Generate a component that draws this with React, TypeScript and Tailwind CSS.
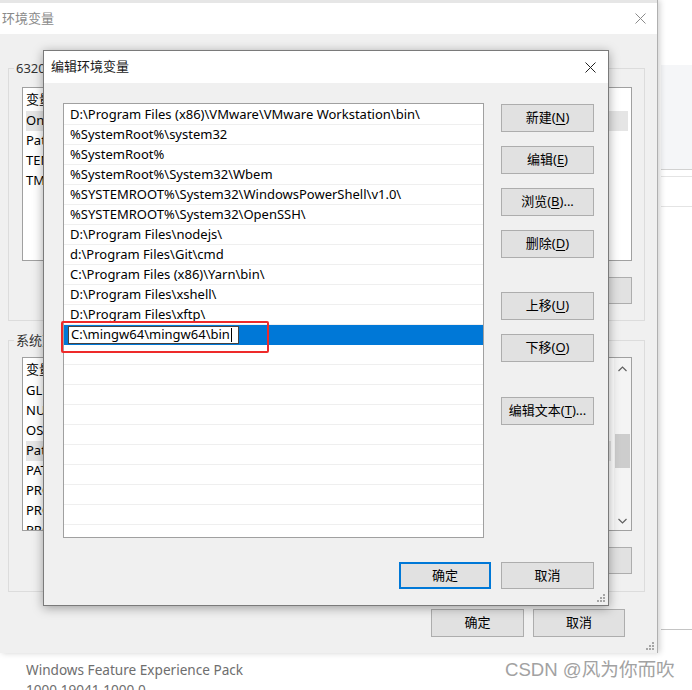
import React from 'react';

const paths = [
  'D:\\Program Files (x86)\\VMware\\VMware Workstation\\bin\\',
  '%SystemRoot%\\system32',
  '%SystemRoot%',
  '%SystemRoot%\\System32\\Wbem',
  '%SYSTEMROOT%\\System32\\WindowsPowerShell\\v1.0\\',
  '%SYSTEMROOT%\\System32\\OpenSSH\\',
  'D:\\Program Files\\nodejs\\',
  'd:\\Program Files\\Git\\cmd',
  'C:\\Program Files (x86)\\Yarn\\bin\\',
  'D:\\Program Files\\xshell\\',
  'D:\\Program Files\\xftp\\',
];

const userVars: [string, string][] = [
  ['OneDrive', 'C:\\Users\\6320\\OneDrive'],
  ['Path', 'C:\\Users\\6320\\AppData\\Local\\Microsoft\\WindowsApps;'],
  ['TEMP', 'C:\\Users\\6320\\AppData\\Local\\Temp'],
  ['TMP', 'C:\\Users\\6320\\AppData\\Local\\Temp'],
];

const sysVars: [string, string][] = [
  ['GLFW_DIR', 'D:\\glfw'],
  ['NUMBER_OF_PROCESSORS', '8'],
  ['OS', 'Windows_NT'],
  ['Path', 'D:\\Program Files (x86)\\VMware\\VMware Workstation\\bin\\;'],
  ['PATHEXT', '.COM;.EXE;.BAT;.CMD;.VBS;.VBE;.JS;.JSE;.WSF;.WSH;.MSC'],
  ['PROCESSOR_ARCHITECTURE', 'AMD64'],
  ['PROCESSOR_IDENTIFIER', 'Intel64 Family 6 Model 142 Stepping 10'],
  ['PROCESSOR_LEVEL', '6'],
];

type BtnProps = { pre: string; hot?: string; post?: string; focus?: boolean; className?: string };

function Btn({ pre, hot, post = '', focus, className = '' }: BtnProps) {
  return (
    <div
      className={`flex items-center justify-center bg-[#e1e1e1] text-[13px] text-black ${
        focus ? 'border-2 border-[#0078d7]' : 'border border-[#adadad]'
      } ${className}`}
    >
      <span>
        {pre}
        {hot && <span className="underline underline-offset-2">{hot}</span>}
        {post}
      </span>
    </div>
  );
}

function CloseX({ color }: { color: string }) {
  return (
    <svg width="11" height="11" viewBox="0 0 11 11">
      <path d="M0.5 0.5L10.5 10.5M10.5 0.5L0.5 10.5" stroke={color} strokeWidth="1" />
    </svg>
  );
}

function Grip() {
  return (
    <svg width="8" height="8" viewBox="0 0 8 8" fill="#a6a6a6">
      <rect x="6" y="0" width="2" height="2" />
      <rect x="3" y="3" width="2" height="2" />
      <rect x="6" y="3" width="2" height="2" />
      <rect x="0" y="6" width="2" height="2" />
      <rect x="3" y="6" width="2" height="2" />
      <rect x="6" y="6" width="2" height="2" />
    </svg>
  );
}

function VarList({ rows, selected, scroll }: { rows: [string, string][]; selected: number; scroll?: boolean }) {
  return (
    <div className="flex h-[174px] overflow-hidden border border-[#a0a0a0] bg-white">
      <div className="min-w-0 flex-1 overflow-hidden">
        <div className="flex h-[23px] items-center pl-[3px] text-[13px] text-black">
          <span className="w-[190px] shrink-0">变量</span>
          <span>值</span>
        </div>
        {rows.map((r, i) => (
          <div
            key={i}
            className={`mx-[3px] flex h-[20px] items-center whitespace-nowrap text-[13px] text-black ${
              i === selected ? 'bg-[#e5e5e5]' : ''
            }`}
          >
            <span className="w-[190px] shrink-0">{r[0]}</span>
            <span>{r[1]}</span>
          </div>
        ))}
      </div>
      {scroll && (
        <div className="flex w-[17px] shrink-0 flex-col items-center bg-[#f4f4f4]">
          <svg width="9" height="6" viewBox="0 0 9 6" className="mt-[8px]">
            <path d="M0.5 5L4.5 1L8.5 5" fill="none" stroke="#606060" strokeWidth="1.2" />
          </svg>
          <div className="mt-[62px] h-[34px] w-[15px] bg-[#cdcdcd]" />
          <svg width="9" height="6" viewBox="0 0 9 6" className="mt-[50px]">
            <path d="M0.5 1L4.5 5L8.5 1" fill="none" stroke="#606060" strokeWidth="1.2" />
          </svg>
        </div>
      )}
    </div>
  );
}

function GroupBox({ label, children, className = '' }: { label: string; children: React.ReactNode; className?: string }) {
  return (
    <div className={`relative border border-[#dcdcdc] pl-[13px] pr-[12px] ${className}`}>
      <span className="absolute -top-[10px] left-[5px] bg-[#f0f0f0] px-[2px] text-[13px] leading-[18px] text-[#333]">
        {label}
      </span>
      {children}
    </div>
  );
}

export default function App() {
  return (
    <div className="relative h-[690px] w-[692px] overflow-hidden bg-white font-['Noto_Sans','Noto_Sans_CJK_SC',sans-serif]">
      {/* things behind the windows */}
      <div className="absolute left-[661px] top-[65px] h-[105px] w-[31px] border-b border-[#d2d2d2] bg-[#f5f6f8]" />
      <div className="absolute left-[661px] top-[176px] h-px w-[31px] bg-[#e4e4e4]" />
      <div className="absolute left-[661px] top-[206px] h-px w-[31px] bg-[#e4e4e4]" />
      <div className="absolute left-[661px] top-[629px] h-px w-[31px] bg-[#c4c4c4]" />
      <div className="absolute left-[26px] top-[660px] text-[13.6px] leading-[20px] text-[#6e6e6e]">
        Windows Feature Experience Pack
        <br />
        1000.19041.1000.0
      </div>

      {/* 环境变量 window */}
      <div className="absolute left-0 top-0 flex h-[653px] w-[658px] flex-col border-r border-[#b0b0b0] bg-[#f0f0f0] shadow-[2px_0_6px_rgba(0,0,0,0.18)]">
        <div className="h-[3px] bg-[#e6e6e6]" />
        <div className="flex h-[31px] items-center justify-between bg-white pl-[2px] pr-[11px]">
          <span className="text-[13px] text-[#8a8a8a]">环境变量</span>
          <CloseX color="#8a8a8a" />
        </div>
        <div className="relative flex flex-1 flex-col pl-[8px] pr-[12px]">
          <GroupBox label="6320 的用户变量(U)" className="mt-[34px] h-[253px] pt-[18px]">
            <VarList rows={userVars} selected={0} />
            <div className="mt-[16px] flex justify-end gap-[10px]">
              <Btn pre="新建(" hot="N" post=")..." className="h-[27px] w-[100px]" />
              <Btn pre="编辑(" hot="E" post=")..." className="h-[27px] w-[100px]" />
              <Btn pre="删除(" hot="D" post=")" className="h-[27px] w-[104px]" />
            </div>
          </GroupBox>
          <GroupBox label="系统变量(S)" className="mt-[19px] h-[252px] pt-[16px]">
            <VarList rows={sysVars} selected={3} scroll />
            <div className="mt-[16px] flex justify-end gap-[10px]">
              <Btn pre="新建(" hot="W" post=")..." className="h-[27px] w-[100px]" />
              <Btn pre="编辑(" hot="I" post=")..." className="h-[27px] w-[100px]" />
              <Btn pre="删除(" hot="L" post=")" className="h-[27px] w-[104px]" />
            </div>
          </GroupBox>
          <div className="mr-[20px] mt-[17px] flex justify-end gap-[9px]">
            <Btn pre="确定" className="h-[28px] w-[93px]" />
            <Btn pre="取消" className="h-[28px] w-[92px]" />
          </div>
          <div className="absolute bottom-[3px] right-[3px]">
            <Grip />
          </div>
        </div>
      </div>

      {/* 编辑环境变量 dialog */}
      <div className="absolute left-[43px] top-[50px] flex h-[556px] w-[566px] flex-col border border-[#7a7a7a] bg-[#f0f0f0] shadow-[0_2px_10px_rgba(0,0,0,0.35)]">
        <div className="flex h-[32px] items-center justify-between bg-white pl-[7px] pr-[12px]">
          <span className="text-[13px] text-[#1a1a1a]">编辑环境变量</span>
          <CloseX color="#222" />
        </div>
        <div className="relative flex flex-1 flex-col pl-[19px] pr-[14px] pt-[20px]">
          <div className="flex">
            <div className="h-[435px] w-[421px] overflow-hidden border border-[#a0a0a0] bg-white pt-[1px]">
              {paths.map((p, i) => (
                <div
                  key={i}
                  className="flex h-[20px] items-center whitespace-nowrap border-b border-[#efefef] pl-[6px] text-[13px] text-black"
                >
                  {p}
                </div>
              ))}
              <div className="flex h-[20px] items-center bg-[#0078d7] pl-[4px]">
                <div className="flex h-[18px] w-[171px] items-center border border-[#444] bg-white pl-[2px] text-[13px] text-black">
                  <span>C:\mingw64\mingw64\bin</span>
                  <span className="ml-px inline-block h-[14px] w-px bg-black" />
                </div>
              </div>
              {Array.from({ length: 10 }).map((_, i) => (
                <div key={i} className="h-[20px] border-b border-[#efefef]" />
              ))}
            </div>
            <div className="ml-[17px] mt-px flex w-[93px] flex-col">
              <Btn pre="新建(" hot="N" post=")" className="h-[28px]" />
              <Btn pre="编辑(" hot="E" post=")" className="mt-[14px] h-[28px]" />
              <Btn pre="浏览(" hot="B" post=")..." className="mt-[14px] h-[28px]" />
              <Btn pre="删除(" hot="D" post=")" className="mt-[14px] h-[28px]" />
              <Btn pre="上移(" hot="U" post=")" className="mt-[34px] h-[28px]" />
              <Btn pre="下移(" hot="O" post=")" className="mt-[14px] h-[28px]" />
              <Btn pre="编辑文本(" hot="T" post=")..." className="mt-[35px] h-[28px]" />
            </div>
          </div>
          <div className="mt-[24px] flex justify-end gap-[10px]">
            <Btn pre="确定" focus className="h-[27px] w-[92px]" />
            <Btn pre="取消" className="h-[27px] w-[93px]" />
          </div>
          <div className="absolute bottom-[3px] right-[3px]">
            <Grip />
          </div>
        </div>
      </div>

      {/* red annotation */}
      <div className="absolute left-[61px] top-[321px] h-[32px] w-[208px] rounded-[2px] border-2 border-[#ee2a2a]" />

      {/* watermark */}
      <div className="absolute left-[505px] top-[658px] font-['Liberation_Sans','Noto_Sans_CJK_SC',sans-serif] text-[18.6px] leading-[24px] text-[#a2a2a2]">
        CSDN @风为你而吹
      </div>
    </div>
  );
}
